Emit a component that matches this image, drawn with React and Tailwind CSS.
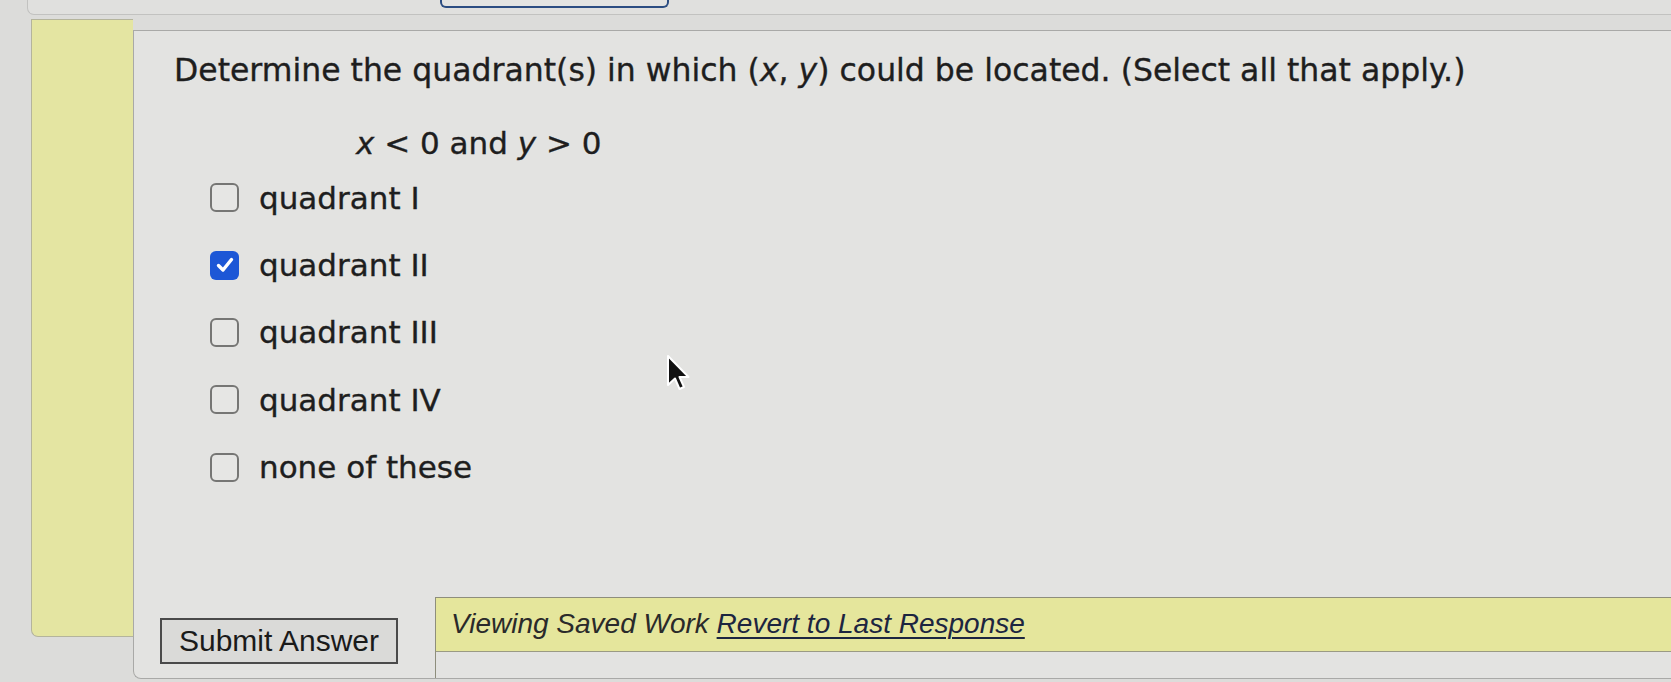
import React from "react";

const verdana = { fontFamily: '"DejaVu Sans", Verdana, sans-serif' };

function Box({ checked }) {
  if (checked) {
    return (
      <div className="w-[29px] h-[29px] rounded-[6px] bg-[#1d57d6] flex items-center justify-center shrink-0">
        <svg width="20" height="20" viewBox="0 0 20 20">
          <path d="M3.5 10.5 L8 15 L16.5 4.5" fill="none" stroke="#ffffff" strokeWidth="3.4" strokeLinecap="round" strokeLinejoin="round" />
        </svg>
      </div>
    );
  }
  return <div className="w-[29px] h-[29px] rounded-[6px] border-2 border-[#767674] bg-[#e6e6e4] shrink-0" />;
}

const options = [
  ["quadrant I", false],
  ["quadrant II", true],
  ["quadrant III", false],
  ["quadrant IV", false],
  ["none of these", false],
];

export default function App() {
  return (
    <div className="w-[1671px] h-[682px] overflow-hidden bg-[#dcdcda] relative flex flex-col" style={verdana}>
      {/* top strip */}
      <div className="h-[15px] ml-[27px] border-l border-b border-[#c2c2c0] rounded-bl-[7px] bg-[#e0e0de] flex shrink-0">
        <div className="ml-[412px] w-[229px] h-[8px] border-2 border-t-0 border-[#2c4d82] rounded-b-[6px] bg-[#e4e4e2]" />
      </div>

      <div className="flex flex-1">
        {/* yellow sidebar */}
        <div className="ml-[31px] mt-[4px] w-[102px] h-[618px] bg-[#e4e5a2] border-l border-t border-b border-[#b4b49c] rounded-bl-[7px] shrink-0" />

        {/* main panel */}
        <div className="flex-1 mt-[15px] h-[649px] bg-[#e3e3e1] border-l border-t border-b border-[#a9a9a7] rounded-bl-[8px] flex flex-col text-[#1e1e1e] [-webkit-text-stroke:0.35px_#1e1e1e]">
          <div className="pl-[40px] mt-[20px] text-[31.5px] leading-[38px] whitespace-nowrap">
            Determine the quadrant(s) in which (<span className="italic">x</span>, <span className="italic">y</span>) could be located. (Select all that apply.)
          </div>
          <div className="pl-[222px] mt-[36px] text-[31px] leading-[36px] whitespace-nowrap">
            <span className="italic">x</span> &lt; 0 and <span className="italic">y</span> &gt; 0
          </div>
          <div className="flex flex-col pl-[76px] mt-[3px]">
            {options.map(([label, checked]) => (
              <div key={label} className="h-[67.4px] flex items-center gap-[20px]">
                <Box checked={checked} />
                <span className="text-[31px] leading-[36px] whitespace-nowrap">{label}</span>
              </div>
            ))}
          </div>

          <div className="flex flex-1 mt-[96px] pl-[26px] [-webkit-text-stroke:0px]" style={{ fontFamily: '"Liberation Sans", Arial, sans-serif' }}>
            <button className="mt-[21px] w-[238px] h-[46px] border-2 border-[#4a4a4a] bg-[#dadad8] text-[30px] leading-none text-[#1a1a1a] flex items-center justify-center shrink-0">
              Submit Answer
            </button>
            <div className="ml-[37px] flex-1 border-l border-t border-[#8e8e7c] flex flex-col">
              <div className="h-[54px] bg-[#e5e69c] border-b border-[#9a9a84] flex items-center pl-[15px] italic text-[28px] text-[#2a2a2a] whitespace-nowrap">
                Viewing Saved Work&nbsp;<span className="underline underline-offset-[4px] decoration-[2px] text-[#1c2540]">Revert to Last Response</span>
              </div>
            </div>
          </div>
        </div>
      </div>

      {/* mouse cursor */}
      <svg className="absolute left-[665px] top-[354px]" width="28" height="42" viewBox="0 0 28 42">
        <path d="M3 2 L3 31 L10 24.5 L14.5 35 L19 33 L14.5 23 L23.5 23 Z" fill="#111111" stroke="#ffffff" strokeWidth="2" strokeLinejoin="round" />
      </svg>
    </div>
  );
}
